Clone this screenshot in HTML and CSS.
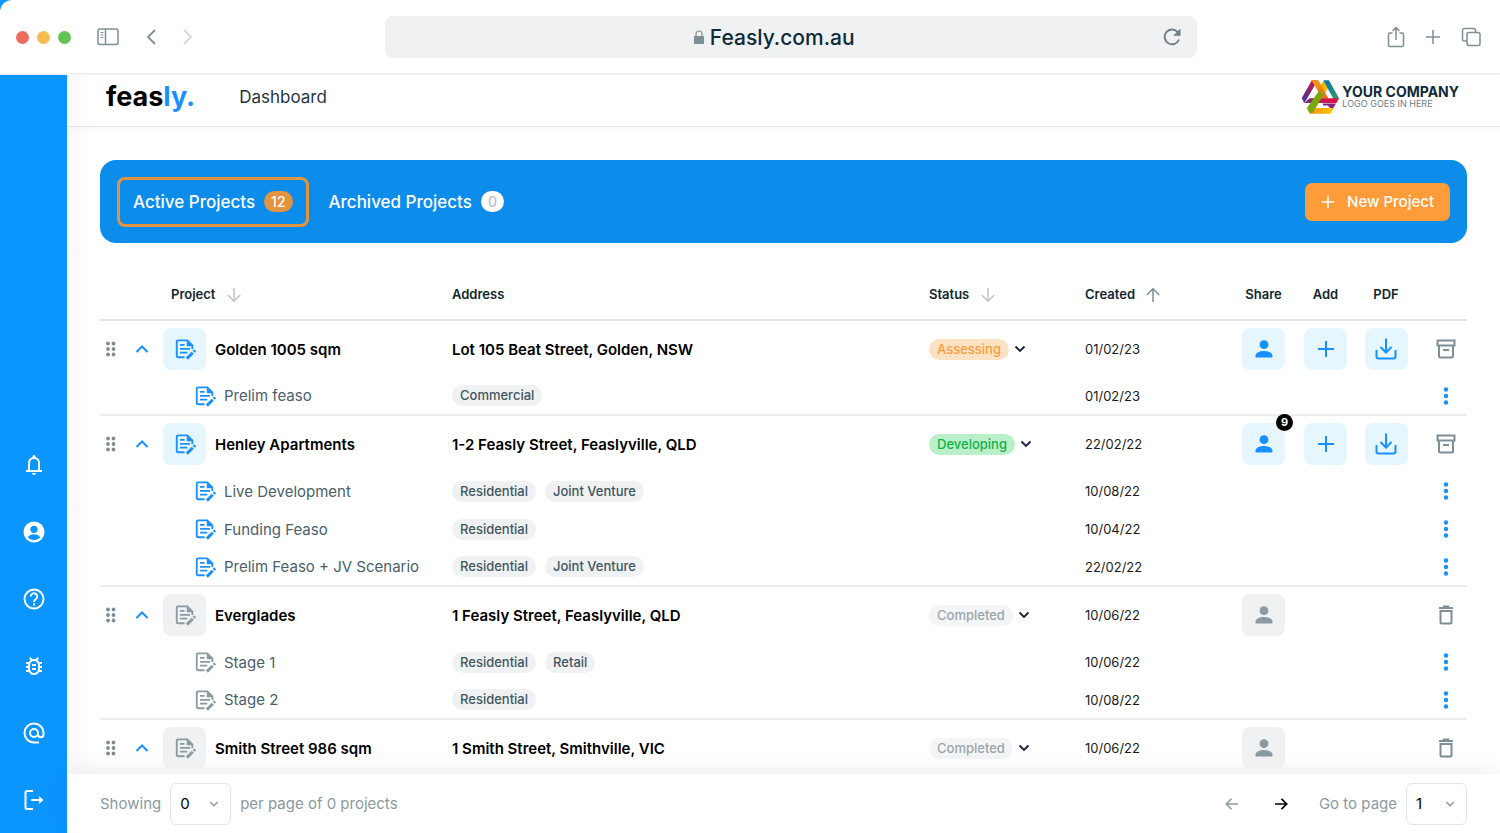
FILE: index.html
```html
<!DOCTYPE html>
<html lang="en">
<head>
  <meta charset="UTF-8">
  <title>Feasly - Dashboard</title>
  <link rel="stylesheet" href="styles.css">
</head>
<body>
  <!-- icon set -->
  <svg width="0" height="0" class="sprite" aria-hidden="true">
    <symbol id="doc" viewBox="0 0 24 24">
      <path d="M11.500 21H4.500a1.500 1.500 0 0 1-1.500-1.500V4a1.500 1.500 0 0 1 1.500-1.500H14.500L20 8v4" fill="none" stroke="currentColor" stroke-width="2"/>
      <path d="M14 2v7h7z" fill="currentColor"/>
      <path d="M6.500 7.500h5M6.500 11.800h11M6.500 16h8" fill="none" stroke="currentColor" stroke-width="2"/>
      <path d="M14 22.500l6.500-6.500" stroke="currentColor" stroke-width="3.200"/>
      <path d="M21.500 15l1.500-1.500" stroke="currentColor" stroke-width="3.200"/>
    </symbol>
    <symbol id="drag" viewBox="0 0 10 16">
      <g fill="currentColor"><circle cx="2" cy="2.500" r="1.900"/><circle cx="7.500" cy="2.500" r="1.900"/><circle cx="2" cy="8" r="1.900"/><circle cx="7.500" cy="8" r="1.900"/><circle cx="2" cy="13.500" r="1.900"/><circle cx="7.500" cy="13.500" r="1.900"/></g>
    </symbol>
    <symbol id="up" viewBox="0 0 14 14"><path d="M1.500 10L7 4.500 12.500 10" fill="none" stroke="currentColor" stroke-width="2"/></symbol>
    <symbol id="down" viewBox="0 0 12 12"><path d="M1.500 3.500L6 8l4.500-4.500" fill="none" stroke="currentColor" stroke-width="1.800"/></symbol>
    <symbol id="sort" viewBox="0 0 14 14"><path d="M7 0v13M.8 7L7 13.200 13.200 7" fill="none" stroke="currentColor" stroke-width="1.500"/></symbol>
    <symbol id="sort-up" viewBox="0 0 14 14"><path d="M7 14V1M.8 7L7 .8 13.200 7" fill="none" stroke="currentColor" stroke-width="1.500"/></symbol>
    <symbol id="person" viewBox="0 0 18 18"><circle cx="9" cy="4.700" r="4.400" fill="currentColor"/><path d="M.5 17.500v-1.800C.5 12.800 4.500 11 9 11s8.500 1.800 8.500 4.700v.8a1 1 0 0 1-1 1z" fill="currentColor"/></symbol>
    <symbol id="plus" viewBox="0 0 18 18"><path d="M9 1v16M1 9h16" stroke="currentColor" stroke-width="2"/></symbol>
    <symbol id="download" viewBox="0 0 22 22"><path d="M11 .5v14M5.500 9l5.500 5.500L16.500 9M1.500 12v6.500a2 2 0 0 0 2 2h15a2 2 0 0 0 2-2V12" fill="none" stroke="currentColor" stroke-width="2"/></symbol>
    <symbol id="archive" viewBox="0 0 20 20"><path d="M1.500 1.500h17v5h-17zM3 6.500v10.500a1.500 1.500 0 0 0 1.500 1.500h11a1.500 1.500 0 0 0 1.500-1.500V6.500M7 11h6" fill="none" stroke="currentColor" stroke-width="2"/></symbol>
    <symbol id="trash" viewBox="0 0 20 20"><path d="M3 3h14M7 1.500h6M4.500 6h11v11.500a1 1 0 0 1-1 1h-9a1 1 0 0 1-1-1z" fill="none" stroke="currentColor" stroke-width="2"/></symbol>
    <symbol id="dots" viewBox="0 0 6 18"><g fill="currentColor"><circle cx="3" cy="2.500" r="2.200"/><circle cx="3" cy="9" r="2.200"/><circle cx="3" cy="15.500" r="2.200"/></g></symbol>
    <symbol id="arrow" viewBox="0 0 14 14"><path d="M1 7h11M7.500 1.800L12.700 7l-5.200 5.200" fill="none" stroke="currentColor" stroke-width="1.700"/></symbol>
  </svg>

  <header class="browser">
    <div class="lights"><span class="red"></span><span class="yellow"></span><span class="green"></span></div>
    <div class="nav-icons">
      <button aria-label="Sidebar"><svg width="22" height="18" viewBox="0 0 22 18" fill="none" stroke="currentColor" stroke-width="1.500"><rect x="1" y="1" width="20" height="15.500" rx="2"/><path d="M8.500 1v15.500"/><path d="M3.500 4.500h3M3.500 7h3M3.500 9.500h3" stroke-width="1"/></svg></button>
      <button aria-label="Back"><svg width="10" height="16" viewBox="0 0 10 16" fill="none" stroke="currentColor" stroke-width="1.800"><path d="M9 1L2 8l7 7"/></svg></button>
      <button aria-label="Forward" class="off"><svg width="10" height="16" viewBox="0 0 10 16" fill="none" stroke="currentColor" stroke-width="1.800"><path d="M1 1l7 7-7 7"/></svg></button>
    </div>
    <div class="address-bar">
      <label for="url" class="lock" aria-label="Address"><svg width="10" height="14" viewBox="0 0 10 14"><rect x="0" y="6" width="10" height="8" rx="1" fill="currentColor"/><path d="M2 6V4a3 3 0 0 1 6 0v2" fill="none" stroke="currentColor" stroke-width="1.200"/></svg></label>
      <input type="text" id="url" value="Feasly.com.au">
      <button class="reload" aria-label="Reload"><svg width="18" height="18" viewBox="0 0 18 18"><path d="M16 11.500A7.400 7.400 0 1 1 14.500 3.800" fill="none" stroke="currentColor" stroke-width="1.900"/><path d="M17.500.5v7.300h-7.300z" fill="currentColor"/></svg></button>
    </div>
    <div class="nav-icons right">
      <button aria-label="Share"><svg width="18" height="22" viewBox="0 0 18 22" fill="none" stroke="currentColor" stroke-width="1.500"><path d="M5.500 7H3a1.500 1.500 0 0 0-1.500 1.500v10.500A1.500 1.500 0 0 0 3 20.500h12a1.500 1.500 0 0 0 1.500-1.500V8.500A1.500 1.500 0 0 0 15 7h-2.500M9 14V1.500M5.500 5L9 1.500 12.500 5"/></svg></button>
      <button aria-label="New tab"><svg width="16" height="16" viewBox="0 0 16 16" stroke="currentColor" stroke-width="1.500"><path d="M8 1v14M1 8h14"/></svg></button>
      <button aria-label="Tabs"><svg width="20" height="20" viewBox="0 0 20 20" fill="none" stroke="currentColor" stroke-width="1.500"><rect x="6" y="5.500" width="13" height="13" rx="2"/><path d="M6 14H3.500a2 2 0 0 1-2-2V3.500a2 2 0 0 1 2-2h9a2 2 0 0 1 2 2v2"/></svg></button>
    </div>
  </header>

  <div class="app">
    <nav class="sidebar">
      <a href="#" aria-label="Notifications"><svg width="24" height="24" viewBox="0 0 24 24"><path d="M4 19v-2h2v-7a6 6 0 0 1 4.500-5.800V3.500a1.500 1.500 0 0 1 3 0v.7A6 6 0 0 1 18 10v7h2v2zm8 3a2 2 0 0 1-2-2h4a2 2 0 0 1-2 2zm-4-5h8v-7a4 4 0 0 0-8 0z" fill="currentColor"/></svg></a>
      <a href="#" aria-label="Account"><svg width="24" height="24" viewBox="0 0 24 24"><circle cx="12" cy="12" r="10.500" fill="currentColor"/><circle cx="12" cy="9.300" r="3.600" class="cut"/><path d="M5.800 17.200c1-2 3.600-3 6.200-3s5.200 1 6.200 3c-1.500 1.700-3.700 2.700-6.200 2.700s-4.700-1-6.200-2.700z" class="cut"/></svg></a>
      <a href="#" aria-label="Help"><svg width="24" height="24" viewBox="0 0 24 24" fill="none" stroke="currentColor" stroke-width="1.900"><circle cx="12" cy="12" r="9.500"/><path d="M8.800 9.500a3.200 3.200 0 1 1 5.200 2.500c-1.300 1-2 1.500-2 3"/><path d="M12 16.300v2.200"/></svg></a>
      <a href="#" aria-label="Report a bug"><svg width="24" height="24" viewBox="0 0 24 24"><path d="M20 8h-2.810c-.45-.78-1.070-1.450-1.820-1.960L17 4.410 15.590 3l-2.170 2.170C12.960 5.060 12.490 5 12 5s-.96.060-1.410.170L8.410 3 7 4.410l1.620 1.630C7.880 6.550 7.260 7.220 6.810 8H4v2h2.090c-.05.33-.09.66-.09 1v1H4v2h2v1c0 .34.04.67.09 1H4v2h2.810c1.040 1.790 2.970 3 5.190 3s4.150-1.210 5.190-3H20v-2h-2.090c.05-.33.090-.66.090-1v-1h2v-2h-2v-1c0-.34-.04-.67-.09-1H20zm-4 7c0 2.210-1.790 4-4 4s-4-1.790-4-4v-4c0-2.210 1.790-4 4-4s4 1.790 4 4zm-6-1h4v2h-4zm0-4h4v2h-4z" fill="currentColor"/></svg></a>
      <a href="#" aria-label="Contact"><svg width="24" height="24" viewBox="0 0 24 24" fill="none" stroke="currentColor" stroke-width="2"><circle cx="12" cy="12" r="4"/><path d="M17 21.500h-5A9.500 9.500 0 1 1 21.500 12v1.500a2.500 2.500 0 0 1-5.500 0V12"/></svg></a>
      <a href="#" aria-label="Log out"><svg width="24" height="24" viewBox="0 0 24 24"><path d="M11 3H5a1.500 1.500 0 0 0-1.500 1.500v15A1.500 1.500 0 0 0 5 21h6M9 12h9" fill="none" stroke="currentColor" stroke-width="2"/><path d="M17 8l4.500 4-4.500 4z" fill="currentColor"/></svg></a>
    </nav>

    <main class="main">
      <div class="topbar">
        <a href="#" class="logo">feas<span>ly.</span></a>
        <a href="#" class="crumb">Dashboard</a>
        <div class="company">
          <svg width="39" height="34" viewBox="361 242 117 104">
            <defs>
              <linearGradient id="g1" x1="0" y1="1" x2="1" y2="0"><stop offset=".2" stop-color="#55308d"/><stop offset="1" stop-color="#e0113f"/></linearGradient>
              <linearGradient id="g2" x1="0" y1="0" x2="1" y2="1"><stop offset="0" stop-color="#f7a014"/><stop offset="1" stop-color="#ee6a10"/></linearGradient>
              <linearGradient id="g3" x1="0" y1="0" x2="1" y2="1"><stop offset=".2" stop-color="#0b7aa5"/><stop offset="1" stop-color="#3fa35a"/></linearGradient>
              <linearGradient id="g4" x1="0" y1="0" x2="1" y2="0"><stop offset="0" stop-color="#6a2a86"/><stop offset=".6" stop-color="#d3134d"/><stop offset="1" stop-color="#e30f3c"/></linearGradient>
              <linearGradient id="g5" x1="0" y1="0" x2="1" y2="0"><stop offset="0" stop-color="#f58a12"/><stop offset="1" stop-color="#fccb0a"/></linearGradient>
            </defs>
            <path d="M428 244l-11 19 12 26 14-23z" fill="#f6bb0a"/>
            <path d="M393 243h18l-32 55-9 14-8-14z" fill="url(#g1)"/>
            <path d="M428 243h17l31 54-8 15-10-14z" fill="url(#g3)"/>
            <path d="M395 243h18l31 56h-19l-33-56z" fill="url(#g2)"/>
            <path d="M427 314h40l-8 14h-10l-8-8h-14z" fill="#7b2a7d"/>
            <path d="M386 298h90l-8 14h-98z" fill="url(#g4)"/>
            <path d="M387 328h73l-9 17h-64l-9-17z" fill="url(#g5)"/>
            <path d="M417 272l11 17-32 53h-10l-8-14z" fill="#79a80d"/>
          </svg>
          <div class="company-text">
            <strong>YOUR COMPANY</strong>
            <small>LOGO GOES IN HERE</small>
          </div>
        </div>
      </div>

      <div class="content">
        <div class="banner">
          <button class="tab active">Active Projects <span class="count">12</span></button>
          <button class="tab">Archived Projects <span class="count">0</span></button>
          <button class="new-project"><svg width="14" height="14"><use href="#plus"/></svg>New Project</button>
        </div>

        <table class="projects">
          <colgroup>
            <col class="c-drag"><col class="c-toggle"><col class="c-name"><col><col class="c-status"><col class="c-created"><col class="c-share"><col class="c-add"><col class="c-pdf"><col class="c-more">
          </colgroup>
          <thead>
            <tr>
              <th></th><th></th>
              <th class="first">Project <svg class="sort" width="14" height="14"><use href="#sort"/></svg></th>
              <th>Address</th>
              <th>Status <svg class="sort" width="14" height="14"><use href="#sort"/></svg></th>
              <th>Created <svg class="sort on" width="14" height="14"><use href="#sort-up"/></svg></th>
              <th class="mid">Share</th><th class="mid">Add</th><th class="mid">PDF</th><th></th>
            </tr>
          </thead>

          <tbody>
            <tr class="project">
              <td><svg class="drag" width="10" height="16"><use href="#drag"/></svg></td>
              <td><button class="toggle" aria-label="Collapse"><svg width="14" height="14"><use href="#up"/></svg></button></td>
              <td><div class="name"><span class="tile"><svg width="22" height="22"><use href="#doc"/></svg></span>Golden 1005 sqm</div></td>
              <td>Lot 105 Beat Street, Golden, NSW</td>
              <td><label class="status assessing"><select aria-label="Status"><option>Assessing</option></select><svg width="12" height="12"><use href="#down"/></svg></label></td>
              <td class="date">01/02/23</td>
              <td class="mid"><button class="tile" aria-label="Share"><svg width="18" height="18"><use href="#person"/></svg></button></td>
              <td class="mid"><button class="tile" aria-label="Add"><svg width="18" height="18"><use href="#plus"/></svg></button></td>
              <td class="mid"><button class="tile" aria-label="PDF"><svg width="22" height="22"><use href="#download"/></svg></button></td>
              <td><button class="more" aria-label="Archive"><svg width="20" height="20"><use href="#archive"/></svg></button></td>
            </tr>
            <tr class="sub">
              <td></td><td></td>
              <td><div class="feaso"><svg width="22" height="22"><use href="#doc"/></svg>Prelim feaso</div></td>
              <td><div class="tags"><span>Commercial</span></div></td>
              <td></td><td class="date">01/02/23</td><td></td><td></td><td></td>
              <td><button class="more menu" aria-label="Options"><svg width="20" height="18"><use href="#dots"/></svg></button></td>
            </tr>
          </tbody>

          <tbody>
            <tr class="project">
              <td><svg class="drag" width="10" height="16"><use href="#drag"/></svg></td>
              <td><button class="toggle" aria-label="Collapse"><svg width="14" height="14"><use href="#up"/></svg></button></td>
              <td><div class="name"><span class="tile"><svg width="22" height="22"><use href="#doc"/></svg></span>Henley Apartments</div></td>
              <td>1-2 Feasly Street, Feaslyville, QLD</td>
              <td><label class="status developing"><select aria-label="Status"><option>Developing</option></select><svg width="12" height="12"><use href="#down"/></svg></label></td>
              <td class="date">22/02/22</td>
              <td class="mid"><button class="tile" aria-label="Share"><svg width="18" height="18"><use href="#person"/></svg><span class="badge">9</span></button></td>
              <td class="mid"><button class="tile" aria-label="Add"><svg width="18" height="18"><use href="#plus"/></svg></button></td>
              <td class="mid"><button class="tile" aria-label="PDF"><svg width="22" height="22"><use href="#download"/></svg></button></td>
              <td><button class="more" aria-label="Archive"><svg width="20" height="20"><use href="#archive"/></svg></button></td>
            </tr>
            <tr class="sub">
              <td></td><td></td>
              <td><div class="feaso"><svg width="22" height="22"><use href="#doc"/></svg>Live Development</div></td>
              <td><div class="tags"><span>Residential</span><span>Joint Venture</span></div></td>
              <td></td><td class="date">10/08/22</td><td></td><td></td><td></td>
              <td><button class="more menu" aria-label="Options"><svg width="20" height="18"><use href="#dots"/></svg></button></td>
            </tr>
            <tr class="sub">
              <td></td><td></td>
              <td><div class="feaso"><svg width="22" height="22"><use href="#doc"/></svg>Funding Feaso</div></td>
              <td><div class="tags"><span>Residential</span></div></td>
              <td></td><td class="date">10/04/22</td><td></td><td></td><td></td>
              <td><button class="more menu" aria-label="Options"><svg width="20" height="18"><use href="#dots"/></svg></button></td>
            </tr>
            <tr class="sub">
              <td></td><td></td>
              <td><div class="feaso"><svg width="22" height="22"><use href="#doc"/></svg>Prelim Feaso + JV Scenario</div></td>
              <td><div class="tags"><span>Residential</span><span>Joint Venture</span></div></td>
              <td></td><td class="date">22/02/22</td><td></td><td></td><td></td>
              <td><button class="more menu" aria-label="Options"><svg width="20" height="18"><use href="#dots"/></svg></button></td>
            </tr>
          </tbody>

          <tbody class="done">
            <tr class="project">
              <td><svg class="drag" width="10" height="16"><use href="#drag"/></svg></td>
              <td><button class="toggle" aria-label="Collapse"><svg width="14" height="14"><use href="#up"/></svg></button></td>
              <td><div class="name"><span class="tile"><svg width="22" height="22"><use href="#doc"/></svg></span>Everglades</div></td>
              <td>1 Feasly Street, Feaslyville, QLD</td>
              <td><label class="status"><select aria-label="Status"><option>Completed</option></select><svg width="12" height="12"><use href="#down"/></svg></label></td>
              <td class="date">10/06/22</td>
              <td class="mid"><button class="tile" aria-label="Share"><svg width="18" height="18"><use href="#person"/></svg></button></td>
              <td></td><td></td>
              <td><button class="more" aria-label="Delete"><svg width="20" height="20"><use href="#trash"/></svg></button></td>
            </tr>
            <tr class="sub">
              <td></td><td></td>
              <td><div class="feaso"><svg width="22" height="22"><use href="#doc"/></svg>Stage 1</div></td>
              <td><div class="tags"><span>Residential</span><span>Retail</span></div></td>
              <td></td><td class="date">10/06/22</td><td></td><td></td><td></td>
              <td><button class="more menu" aria-label="Options"><svg width="20" height="18"><use href="#dots"/></svg></button></td>
            </tr>
            <tr class="sub">
              <td></td><td></td>
              <td><div class="feaso"><svg width="22" height="22"><use href="#doc"/></svg>Stage 2</div></td>
              <td><div class="tags"><span>Residential</span></div></td>
              <td></td><td class="date">10/08/22</td><td></td><td></td><td></td>
              <td><button class="more menu" aria-label="Options"><svg width="20" height="18"><use href="#dots"/></svg></button></td>
            </tr>
          </tbody>

          <tbody class="done">
            <tr class="project">
              <td><svg class="drag" width="10" height="16"><use href="#drag"/></svg></td>
              <td><button class="toggle" aria-label="Collapse"><svg width="14" height="14"><use href="#up"/></svg></button></td>
              <td><div class="name"><span class="tile"><svg width="22" height="22"><use href="#doc"/></svg></span>Smith Street 986 sqm</div></td>
              <td>1 Smith Street, Smithville, VIC</td>
              <td><label class="status"><select aria-label="Status"><option>Completed</option></select><svg width="12" height="12"><use href="#down"/></svg></label></td>
              <td class="date">10/06/22</td>
              <td class="mid"><button class="tile" aria-label="Share"><svg width="18" height="18"><use href="#person"/></svg></button></td>
              <td></td><td></td>
              <td><button class="more" aria-label="Delete"><svg width="20" height="20"><use href="#trash"/></svg></button></td>
            </tr>
          </tbody>
        </table>
      </div>

      <footer class="pager">
        <label for="perPage">Showing</label>
        <span class="picker"><select id="perPage"><option>0</option></select><svg width="10" height="10"><use href="#down"/></svg></span>
        <span>per page of 0 projects</span>
        <div class="pages">
          <button class="prev" aria-label="Previous page"><svg width="14" height="14" viewBox="0 0 14 14"><path d="M13 7H2M6.500 1.800L1.300 7l5.200 5.200" fill="none" stroke="currentColor" stroke-width="1.500"/></svg></button>
          <button class="next" aria-label="Next page"><svg width="14" height="14"><use href="#arrow"/></svg></button>
          <label for="page">Go to page</label>
          <span class="picker"><select id="page"><option>1</option></select><svg width="10" height="10"><use href="#down"/></svg></span>
        </div>
      </footer>
    </main>
  </div>
</body>
</html>
```

FILE: styles.css
```css
* { box-sizing: border-box; }
body { margin: 0; height: 100vh; display: flex; flex-direction: column; overflow: hidden; background: #0b95ff; font-family: Inter, "Liberation Sans", sans-serif; font-size: 15px; color: #000; }
button, input, select { font: inherit; color: inherit; border: 0; padding: 0; margin: 0; background: none; }
select { appearance: none; }
a { color: inherit; text-decoration: none; }
svg { display: block; flex: none; }
.sprite { position: absolute; }

/* browser window bar */
.browser { flex: none; height: 75px; display: flex; align-items: center; background: #fff; border-bottom: 2px solid #f1f2f2; border-top-left-radius: 12px; padding: 1px 19px 0 16px; color: #7d8e97; }
.lights { display: flex; gap: 8px; }
.lights span { width: 13px; height: 13px; border-radius: 50%; }
.red { background: #ec6a5e; }
.yellow { background: #f4bd4f; }
.green { background: #61c454; }
.nav-icons { display: flex; align-items: center; gap: 27px; padding-left: 26px; }
.nav-icons.right { gap: 20px; padding-left: 0; margin-left: auto; }
.off { opacity: .35; }
.address-bar { width: 55.4%; height: 42px; margin-left: 192px; display: flex; align-items: center; justify-content: center; gap: 6px; padding-right: 32px; background: #f0f1f3; border-radius: 8px; position: relative; }
.address-bar input { width: 146px; font-size: 21px; font-weight: 500; color: #0f2a3a; }
.reload { position: absolute; right: 16px; color: #6b7d86; }

.app { flex: 1; min-height: 0; display: flex; }
.sidebar { flex: none; width: 67px; display: flex; flex-direction: column; align-items: center; justify-content: flex-end; gap: 43px; padding-bottom: 21px; background: #0b95ff; color: #fff; }
.cut { fill: #0b95ff; }
.main { flex: 1; min-width: 0; display: flex; flex-direction: column; background: linear-gradient(90deg, #f7f8f8, #fff 28px); }

.topbar { flex: none; height: 52px; display: flex; align-items: center; padding: 0 41px 8px 39px; border-bottom: 1px solid #e2e6e8; box-shadow: 0 2px 8px rgba(0, 0, 0, .03); }
.logo { font-size: 27px; font-weight: 700; line-height: 32px; }
.logo span { color: #1890ff; }
.crumb { margin-left: 44px; font-size: 17px; color: #1f3541; }
.company { margin-left: auto; display: flex; align-items: center; gap: 2px; color: #0f2a3a; }
.company-text { display: flex; flex-direction: column; }
.company strong { font-size: 14px; font-weight: 700; line-height: 14px; }
.company small { font-size: 9px; line-height: 10px; color: #6b7d86; }

.content { flex: 1; min-height: 0; overflow: hidden; padding: 33px 33px 0; }
.banner { height: 83px; display: flex; align-items: center; gap: 4px; padding: 0 17px; background: #0c8dec; border-radius: 16px; color: #fff; }
.tab { height: 50px; display: flex; align-items: center; gap: 9px; padding: 0 13px; border: 3px solid transparent; border-radius: 8px; font-size: 17px; font-weight: 500; }
.tab.active { border-color: #e2943f; }
.count { padding: 0 7px; border-radius: 11px; background: #fff; color: #b9c0c4; font-size: 14px; line-height: 21px; }
.active .count { background: #e2943f; color: #fff; }
.new-project { margin-left: auto; height: 38px; display: flex; align-items: center; gap: 12px; padding: 0 16px; border-radius: 7px; background: #fd9c38; font-size: 15px; font-weight: 500; }

/* project table */
.projects { width: 100%; table-layout: fixed; border-collapse: separate; border-spacing: 0; margin-top: 26px; }
.projects th, .projects td { padding: 0; text-align: left; vertical-align: middle; white-space: nowrap; }
.projects th { height: 52px; border-bottom: 2px solid #e0e4e6; font-size: 13px; font-weight: 600; color: #10262f; }
.projects th.first { padding-left: 8px; }
.projects .mid { text-align: center; }
.c-drag { width: 21px; }
.c-toggle { width: 42px; }
.c-name { width: 289px; }
.c-status { width: 156px; }
.c-created { width: 147px; }
.c-share { width: 63px; }
.c-add { width: 61px; }
.c-pdf { width: 60px; }
.c-more { width: 51px; }
.sort { display: inline-block; vertical-align: middle; margin-left: 8px; color: #bcc4c9; }
.sort.on { color: #7d8e97; }
.project td { height: 56px; font-weight: 600; }
.sub td { height: 38px; }
.sub:last-child td { height: 39px; border-bottom: 2px solid #ebeeee; }
.drag { margin-left: 6px; color: #7d8e97; }
.toggle { display: block; margin-left: 14px; color: #1890ff; }
.name { display: flex; align-items: center; gap: 9px; }
.tile { position: relative; display: inline-flex; align-items: center; justify-content: center; vertical-align: middle; width: 43px; height: 42px; border-radius: 8px; background: #e6f6ff; color: #1890ff; }
.done .tile { background: #f0f1f3; color: #8b99a1; }
.badge { position: absolute; top: -9px; right: -8px; width: 17px; height: 17px; border-radius: 50%; background: #000; color: #fff; font-size: 11px; line-height: 17px; font-weight: 700; text-align: center; }
.feaso { display: flex; align-items: center; gap: 8px; padding-left: 31px; color: #4a606b; }
.feaso svg { color: #1890ff; }
.done .feaso svg { color: #8b99a1; }
.tags { display: flex; gap: 9px; }
.tags span { padding: 0 8px; border-radius: 11px; background: #f0f1f3; color: #3f5661; font-size: 13px; font-weight: 500; line-height: 21px; }
.status { display: inline-flex; align-items: center; gap: 5px; vertical-align: middle; color: #1c1c3c; }
.status select { height: 21px; padding: 0 8px; border-radius: 11px; background: #f4f5f6; color: #9aa5ab; font-size: 13px; font-weight: 500; }
.assessing select { background: #ffe2c4; color: #fd9c38; }
.developing select { background: #b9f0ca; color: #12b245; }
.projects .date { font-size: 13px; font-weight: 400; color: #1a1a1a; }
.more { display: block; margin-left: auto; margin-right: 11px; color: #7d8e97; }
.menu { color: #1890ff; }

/* pagination */
.pager { flex: none; height: 59px; display: flex; align-items: center; gap: 9px; padding: 0 33px; background: #fff; box-shadow: 0 -4px 24px rgba(0, 0, 0, .07); color: #8b99a1; }
.picker { position: relative; width: 61px; height: 42px; display: flex; align-items: center; border: 1px solid #e2e6e8; border-radius: 6px; }
.picker select { width: 100%; height: 100%; padding-left: 9px; color: #000; }
.picker svg { position: absolute; right: 11px; pointer-events: none; }
.pages { margin-left: auto; display: flex; align-items: center; gap: 9px; }
.prev { margin-right: 26px; }
.next { margin-right: 22px; color: #000; }
```
